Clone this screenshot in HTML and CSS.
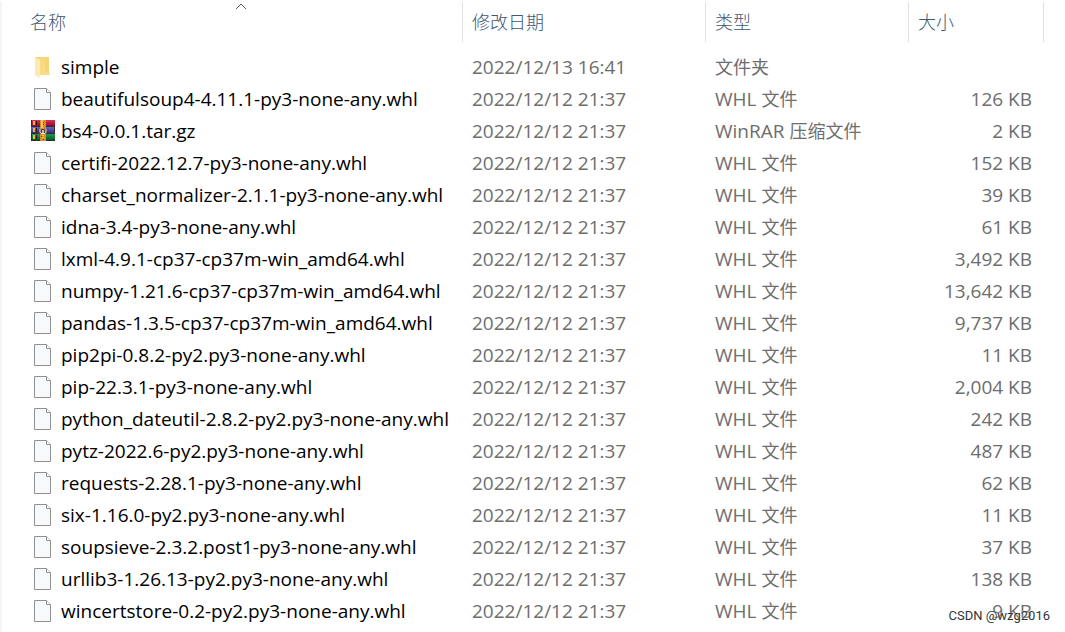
FILE: index.html
```html
<!DOCTYPE html>
<html lang="zh-CN">
<head>
    <meta charset="UTF-8">
    <meta name="viewport" content="width=device-width, initial-scale=1.0">
    <title>文件列表</title>
    <link rel="stylesheet" href="styles.css">
</head>
<body>

    <!-- Iconos compartidos -->
    <svg class="sprite" aria-hidden="true">
        <defs>
            <linearGradient id="folder-fill" x1="0" y1="0" x2="1" y2="1">
                <stop offset="0" stop-color="#f6d476"/>
                <stop offset="1" stop-color="#fbe08c"/>
            </linearGradient>
            <linearGradient id="red" x1="0" y1="0" x2="0" y2="1">
                <stop offset="0" stop-color="#e0304f"/>
                <stop offset="1" stop-color="#8c1030"/>
            </linearGradient>
            <linearGradient id="blue" x1="0" y1="0" x2="0" y2="1">
                <stop offset="0" stop-color="#6a68c4"/>
                <stop offset="1" stop-color="#2f2c80"/>
            </linearGradient>
            <linearGradient id="green" x1="0" y1="0" x2="0" y2="1">
                <stop offset="0" stop-color="#1f9a4c"/>
                <stop offset="1" stop-color="#075c26"/>
            </linearGradient>
        </defs>
        <symbol id="icon-folder" viewBox="0 0 24 24">
            <path d="M4 2h14v16h1v2H8z" fill="url(#folder-fill)"/>
            <path d="M14 2h4v16h-4z" fill="#f2cd68" opacity=".5"/>
            <path d="M4 2l5 3v15l-1 3-4-3z" fill="#fdeab0"/>
        </symbol>
        <symbol id="icon-file" viewBox="0 0 24 24">
            <path d="M3.5 1.5h12l4 4v17h-16z" fill="#f8f9fa" stroke="#919191"/>
            <path d="M15.5 1.5v4h4" fill="#fff" stroke="#919191"/>
        </symbol>
        <symbol id="icon-rar" viewBox="0 0 24 24">
            <path d="M0 1h24v21H0z" fill="#3a2430"/>
            <path d="M1 1h23v6H1z" fill="url(#red)"/>
            <path d="M0 8h23v6H0z" fill="url(#blue)"/>
            <path d="M1 15h23v6H1z" fill="url(#green)"/>
            <path d="M2 2h2v4H2zM2 9h2v4H2zM2 16h2v4H2z" fill="#f2b632"/>
            <path d="M5 2h1v4H5zM5 9h1v4H5zM5 16h1v4H5z" fill="#201828"/>
            <path d="M9 1h6v21H9z" fill="#d98f28"/>
            <path d="M10 1h2v8h-2zM11 16h2v1h-2zM11 18h2v1h-2z" fill="#f6c45e"/>
            <path d="M12 3h1v1h-1zM12 5h1v1h-1zM10 17h1v1h-1zM12 20h1v1h-1z" fill="#7d4710"/>
            <path d="M8 10h8v5H8z" fill="#5b4540"/>
            <path d="M9 10v3l1 1.500h4l1-1.500v-3" fill="none" stroke="#eee6dc"/>
            <path d="M11 11h2v3h-2z" fill="#d8b48a"/>
        </symbol>
    </svg>

    <main class="explorer">
        <table class="file-list">
            <colgroup>
                <col>
                <col class="col-date">
                <col class="col-type">
                <col class="col-size">
            </colgroup>
            <thead>
                <tr>
                    <th class="name" aria-sort="ascending">
                        <button type="button">名称</button>
                        <svg class="sort-arrow" viewBox="0 0 12 7" aria-hidden="true"><path d="M1 6l5-5 5 5"/></svg>
                    </th>
                    <th><button type="button">修改日期</button></th>
                    <th><button type="button">类型</button></th>
                    <th><button type="button">大小</button></th>
                </tr>
            </thead>
            <tbody>
                <tr>
                    <td class="name"><div class="file"><svg class="icon"><use href="#icon-folder"/></svg>simple</div></td>
                    <td>2022/12/13 16:41</td>
                    <td class="type">文件夹</td>
                    <td class="size"></td>
                </tr>
                <tr>
                    <td class="name"><div class="file"><svg class="icon"><use href="#icon-file"/></svg>beautifulsoup4-4.11.1-py3-none-any.whl</div></td>
                    <td>2022/12/12 21:37</td>
                    <td class="type"><span class="format">WHL </span>文件</td>
                    <td class="size">126 KB</td>
                </tr>
                <tr>
                    <td class="name"><div class="file"><svg class="icon"><use href="#icon-rar"/></svg>bs4-0.0.1.tar.gz</div></td>
                    <td>2022/12/12 21:37</td>
                    <td class="type"><span class="format">WinRAR </span>压缩文件</td>
                    <td class="size">2 KB</td>
                </tr>
                <tr>
                    <td class="name"><div class="file"><svg class="icon"><use href="#icon-file"/></svg>certifi-2022.12.7-py3-none-any.whl</div></td>
                    <td>2022/12/12 21:37</td>
                    <td class="type"><span class="format">WHL </span>文件</td>
                    <td class="size">152 KB</td>
                </tr>
                <tr>
                    <td class="name"><div class="file"><svg class="icon"><use href="#icon-file"/></svg>charset_normalizer-2.1.1-py3-none-any.whl</div></td>
                    <td>2022/12/12 21:37</td>
                    <td class="type"><span class="format">WHL </span>文件</td>
                    <td class="size">39 KB</td>
                </tr>
                <tr>
                    <td class="name"><div class="file"><svg class="icon"><use href="#icon-file"/></svg>idna-3.4-py3-none-any.whl</div></td>
                    <td>2022/12/12 21:37</td>
                    <td class="type"><span class="format">WHL </span>文件</td>
                    <td class="size">61 KB</td>
                </tr>
                <tr>
                    <td class="name"><div class="file"><svg class="icon"><use href="#icon-file"/></svg>lxml-4.9.1-cp37-cp37m-win_amd64.whl</div></td>
                    <td>2022/12/12 21:37</td>
                    <td class="type"><span class="format">WHL </span>文件</td>
                    <td class="size">3,492 KB</td>
                </tr>
                <tr>
                    <td class="name"><div class="file"><svg class="icon"><use href="#icon-file"/></svg>numpy-1.21.6-cp37-cp37m-win_amd64.whl</div></td>
                    <td>2022/12/12 21:37</td>
                    <td class="type"><span class="format">WHL </span>文件</td>
                    <td class="size">13,642 KB</td>
                </tr>
                <tr>
                    <td class="name"><div class="file"><svg class="icon"><use href="#icon-file"/></svg>pandas-1.3.5-cp37-cp37m-win_amd64.whl</div></td>
                    <td>2022/12/12 21:37</td>
                    <td class="type"><span class="format">WHL </span>文件</td>
                    <td class="size">9,737 KB</td>
                </tr>
                <tr>
                    <td class="name"><div class="file"><svg class="icon"><use href="#icon-file"/></svg>pip2pi-0.8.2-py2.py3-none-any.whl</div></td>
                    <td>2022/12/12 21:37</td>
                    <td class="type"><span class="format">WHL </span>文件</td>
                    <td class="size">11 KB</td>
                </tr>
                <tr>
                    <td class="name"><div class="file"><svg class="icon"><use href="#icon-file"/></svg>pip-22.3.1-py3-none-any.whl</div></td>
                    <td>2022/12/12 21:37</td>
                    <td class="type"><span class="format">WHL </span>文件</td>
                    <td class="size">2,004 KB</td>
                </tr>
                <tr>
                    <td class="name"><div class="file"><svg class="icon"><use href="#icon-file"/></svg>python_dateutil-2.8.2-py2.py3-none-any.whl</div></td>
                    <td>2022/12/12 21:37</td>
                    <td class="type"><span class="format">WHL </span>文件</td>
                    <td class="size">242 KB</td>
                </tr>
                <tr>
                    <td class="name"><div class="file"><svg class="icon"><use href="#icon-file"/></svg>pytz-2022.6-py2.py3-none-any.whl</div></td>
                    <td>2022/12/12 21:37</td>
                    <td class="type"><span class="format">WHL </span>文件</td>
                    <td class="size">487 KB</td>
                </tr>
                <tr>
                    <td class="name"><div class="file"><svg class="icon"><use href="#icon-file"/></svg>requests-2.28.1-py3-none-any.whl</div></td>
                    <td>2022/12/12 21:37</td>
                    <td class="type"><span class="format">WHL </span>文件</td>
                    <td class="size">62 KB</td>
                </tr>
                <tr>
                    <td class="name"><div class="file"><svg class="icon"><use href="#icon-file"/></svg>six-1.16.0-py2.py3-none-any.whl</div></td>
                    <td>2022/12/12 21:37</td>
                    <td class="type"><span class="format">WHL </span>文件</td>
                    <td class="size">11 KB</td>
                </tr>
                <tr>
                    <td class="name"><div class="file"><svg class="icon"><use href="#icon-file"/></svg>soupsieve-2.3.2.post1-py3-none-any.whl</div></td>
                    <td>2022/12/12 21:37</td>
                    <td class="type"><span class="format">WHL </span>文件</td>
                    <td class="size">37 KB</td>
                </tr>
                <tr>
                    <td class="name"><div class="file"><svg class="icon"><use href="#icon-file"/></svg>urllib3-1.26.13-py2.py3-none-any.whl</div></td>
                    <td>2022/12/12 21:37</td>
                    <td class="type"><span class="format">WHL </span>文件</td>
                    <td class="size">138 KB</td>
                </tr>
                <tr>
                    <td class="name"><div class="file"><svg class="icon"><use href="#icon-file"/></svg>wincertstore-0.2-py2.py3-none-any.whl</div></td>
                    <td>2022/12/12 21:37</td>
                    <td class="type"><span class="format">WHL </span>文件</td>
                    <td class="size">9 KB</td>
                </tr>
            </tbody>
        </table>
        <span class="watermark">CSDN @wzg2016</span>
    </main>

</body>
</html>
```
FILE: styles.css
```css
* {
    box-sizing: border-box;
}

body {
    margin: 0;
    padding-top: 2px;
    background-color: #fff;
    font-family: "Open Sans", "Noto Sans CJK SC", sans-serif;
}

.sprite {
    position: absolute;
    width: 0;
    height: 0;
}

.explorer {
    position: relative;
    min-height: calc(100vh - 2px);
    padding-right: 21px;
    border-left: 2px solid #f5f5f5;
}

.file-list {
    width: 100%;
    table-layout: fixed;
    border-collapse: separate;
    border-spacing: 0;
}

.col-date {
    width: 243px;
}

.col-type {
    width: 203px;
}

.col-size {
    width: 135px;
}

th {
    position: relative;
    height: 40px;
    padding: 0;
    border-right: 1px solid #e2e2e2;
    vertical-align: top;
}

th.name {
    padding-left: 19px;
}

th button {
    display: block;
    width: 100%;
    height: 38px;
    padding: 0 9px;
    border: none;
    background: none;
    color: #3c5876;
    font-family: "Noto Sans CJK SC", sans-serif;
    font-size: 18px;
    font-weight: 300;
    text-align: left;
    cursor: pointer;
}

.sort-arrow {
    position: absolute;
    top: 1px;
    left: calc(50% + 3px);
    width: 12px;
    height: 7px;
    fill: none;
    stroke: #555;
}

/* espacio entre la cabecera y la primera fila */
tbody::before {
    content: "";
    display: block;
    height: 9px;
}

td {
    height: 32px;
    padding: 0 9px;
    color: #6d6d6d;
    font-size: 19px;
    line-height: 32px;
    white-space: nowrap;
}

td.name {
    padding: 0 0 0 29px;
    color: #000;
}

.file {
    display: flex;
    align-items: center;
    gap: 6px;
    height: 32px;
}

.icon {
    flex: none;
    width: 24px;
    height: 24px;
}

td.type {
    font-size: 18px;
}

.format {
    font-size: 19px;
    line-height: 1;
}

td.size {
    padding-right: 12px;
    text-align: right;
}

.watermark {
    position: absolute;
    right: 15px;
    bottom: 8px;
    color: #333;
    font-family: Roboto, Arial, sans-serif;
    font-size: 13px;
    line-height: 16px;
    text-shadow: 0 0 2px #fff;
}
```
